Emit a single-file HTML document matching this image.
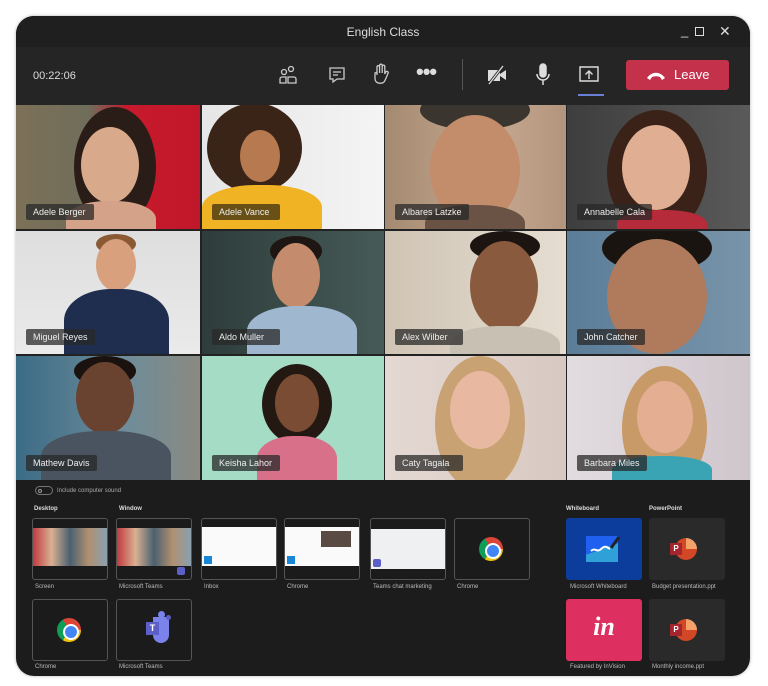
<!DOCTYPE html><html><head><style>
*{margin:0;padding:0;box-sizing:border-box}
body{width:768px;height:686px;background:#fff;font-family:"Liberation Sans",sans-serif;position:relative;overflow:hidden}
.win{position:absolute;left:16px;top:16px;width:734px;height:660px;border-radius:18px;background:#1c1c1c;overflow:hidden;box-shadow:0 0 3px rgba(0,0,0,.3)}
.title{position:absolute;left:0;top:0;width:734px;height:31px;background:#1f1f1f;color:#ddd;font-size:12px;text-align:center;line-height:32px}
.tb{position:absolute;left:0;top:31px;width:734px;height:58px;background:#252525}
.t{position:absolute;overflow:hidden}
.lbl{position:absolute;left:10px;bottom:9px;height:16px;padding:0 7px;background:rgba(40,40,40,.75);color:#eee;font-size:9px;line-height:16px;border-radius:2px;min-width:68px}
.hd{position:absolute;border-radius:50%}
.bd{position:absolute;border-radius:45% 45% 0 0}
.th{position:absolute;width:76px;height:62px;border:1.5px solid #555;border-radius:3px;background:#1b1b1b;overflow:hidden}
.cap{position:absolute;color:#bbb;font-size:6px}
.sec{position:absolute;color:#ddd;font-size:6px;font-weight:bold}
.chrome{position:absolute;width:24px;height:24px;border-radius:50%;background:conic-gradient(from -30deg,#db4437 0 120deg,#f4c20d 120deg 240deg,#0f9d58 240deg 360deg)}
.chrome:after{content:"";position:absolute;left:6px;top:6px;width:12px;height:12px;border-radius:50%;background:#4285f4;border:2px solid #fff}
.pp{position:absolute;left:26px;top:20px;width:22px;height:22px;border-radius:50%;background:conic-gradient(#f5a26a 0 90deg,#d24726 90deg 360deg)}
.pp:before{content:"P";position:absolute;left:-5px;top:5px;width:12px;height:12px;background:#a4262c;color:#fff;font-size:8px;font-weight:bold;text-align:center;line-height:12px}
</style></head><body>
<div class="win">
<div class="title">English Class</div>
<div style="position:absolute;left:665px;top:8px;color:#ddd;font-size:13px;line-height:14px">_</div>
<div style="position:absolute;left:679px;top:11px;width:9px;height:9px;border:1.3px solid #ddd"></div>
<div style="position:absolute;left:703px;top:7px;color:#ddd;font-size:14px">✕</div>
<div class="tb">
<div style="position:absolute;left:17px;top:23px;color:#ddd;font-size:11px">00:22:06</div>
<svg style="position:absolute;left:262px;top:18px" width="20" height="20" viewBox="0 0 20 20" fill="none" stroke="#ccc" stroke-width="1.3"><circle cx="13" cy="4" r="2.5"/><circle cx="6" cy="7" r="2.5"/><path d="M2 18v-4a2 2 0 012-2h4v6z"/><path d="M10 12h6a2 2 0 012 2v4h-8z"/></svg>
<svg style="position:absolute;left:311px;top:18px" width="20" height="20" viewBox="0 0 20 20" fill="none" stroke="#ccc" stroke-width="1.3"><path d="M3 3h14v11h-7l-4 3v-3H3z"/><path d="M6 7h8M6 10h5"/></svg>
<svg style="position:absolute;left:355px;top:16px" width="20" height="22" viewBox="0 0 20 22" fill="none" stroke="#ccc" stroke-width="1.3"><path d="M6 12V4a1.3 1.3 0 012.6 0v6V2.5a1.3 1.3 0 012.6 0V10V3.5a1.3 1.3 0 012.6 0V11l1-2a1.3 1.3 0 012.3 1.2l-3 7a5 5 0 01-4.6 3h-1A4.5 4.5 0 014 16v-6a1.2 1.2 0 012 0z"/></svg>
<div style="position:absolute;left:400px;top:12px;color:#ddd;font-size:22px;letter-spacing:-1px;font-weight:bold">•••</div>
<div style="position:absolute;left:446px;top:12px;width:1px;height:31px;background:#555"></div>
<svg style="position:absolute;left:470px;top:18px" width="22" height="20" viewBox="0 0 22 20"><path d="M2 5h12v11H2z" fill="#ddd"/><path d="M14 9l6-4v10l-6-4z" fill="#ddd"/><path d="M3 19L17 1" stroke="#252525" stroke-width="3"/><path d="M3 19L17 1" stroke="#ddd" stroke-width="1.3"/></svg>
<svg style="position:absolute;left:518px;top:16px" width="18" height="24" viewBox="0 0 18 24" fill="none" stroke="#ddd" stroke-width="1.5"><rect x="6" y="1" width="6" height="13" rx="3" fill="#ddd"/><path d="M3 11a6 6 0 0012 0M9 17v5"/></svg>
<svg style="position:absolute;left:562px;top:17px" width="22" height="22" viewBox="0 0 22 22" fill="none" stroke="#ddd" stroke-width="1.4"><path d="M2 3h18v14H2z"/><path d="M11 15V7M7.5 10.5L11 7l3.5 3.5"/></svg>
<div style="position:absolute;left:562px;top:47px;width:26px;height:2px;background:#6a7fd6"></div>
<div style="position:absolute;left:610px;top:13px;width:103px;height:30px;background:#c4314b;border-radius:3px;color:#fff;font-size:13px;line-height:30px;padding-left:48px">Leave</div>
<svg style="position:absolute;left:630px;top:24px" width="20" height="10" viewBox="0 0 20 10"><path d="M1 7c5-7 13-7 18 0l-3 2-2-3c-3-1-5-1-8 0l-2 3z" fill="#fff"/></svg>
</div>

<!-- grid -->
<div style="position:absolute;left:0;top:89px;width:734px;height:375px;background:#222"></div>
<div id="g"></div>
<!-- tiles -->
<div class="t" style="left:0;top:89px;width:184px;height:124px;background:linear-gradient(90deg,#7d7058 0,#6f6d5a 40%,#c81a2c 60%,#c0182a 100%)">
<div class="hd" style="left:58px;top:2px;width:82px;height:120px;background:#2a1d18"></div><div class="hd" style="left:65px;top:22px;width:58px;height:76px;background:#d9a98b"></div><div class="bd" style="left:50px;top:96px;width:90px;height:40px;background:#d3a289"></div>
<div class="lbl">Adele Berger</div></div>
<div class="t" style="left:186px;top:89px;width:182px;height:124px;background:linear-gradient(90deg,#e6e6e6,#f4f4f4)">
<div class="hd" style="left:5px;top:-2px;width:95px;height:90px;background:#3a2418"></div><div class="hd" style="left:38px;top:25px;width:40px;height:52px;background:#b7794f"></div><div class="bd" style="left:0;top:80px;width:120px;height:50px;background:#f0b323"></div>
<div class="lbl" style="background:rgba(70,55,20,.8)">Adele Vance</div></div>
<div class="t" style="left:369px;top:89px;width:181px;height:124px;background:linear-gradient(90deg,#a58a72,#c6a890 60%,#b2957c)">
<div class="hd" style="left:35px;top:-15px;width:110px;height:40px;background:#3b3530"></div><div class="hd" style="left:45px;top:10px;width:90px;height:110px;background:#c38c6a"></div><div class="bd" style="left:40px;top:100px;width:100px;height:40px;background:#6a5244"></div>
<div class="lbl">Albares Latzke</div></div>
<div class="t" style="left:551px;top:89px;width:183px;height:124px;background:linear-gradient(90deg,#3e3e3e,#5a5a5a)">
<div class="hd" style="left:40px;top:5px;width:100px;height:125px;background:#3a2218"></div><div class="hd" style="left:55px;top:20px;width:68px;height:85px;background:#e0ae92"></div><div class="bd" style="left:50px;top:105px;width:90px;height:30px;background:#b52b3a"></div>
<div class="lbl">Annabelle Cala</div></div>

<div class="t" style="left:0;top:215px;width:184px;height:123px;background:linear-gradient(180deg,#dedede,#eaeaea)">
<div class="hd" style="left:80px;top:3px;width:40px;height:20px;background:#8a5a34"></div><div class="hd" style="left:80px;top:8px;width:40px;height:52px;background:#d8a07c"></div><div class="bd" style="left:48px;top:58px;width:105px;height:70px;background:#1f2d4f"></div>
<div class="lbl">Miguel Reyes</div></div>
<div class="t" style="left:186px;top:215px;width:182px;height:123px;background:linear-gradient(90deg,#2e3d3b,#465a57)">
<div class="hd" style="left:68px;top:5px;width:52px;height:30px;background:#1e1612"></div><div class="hd" style="left:70px;top:12px;width:48px;height:65px;background:#c48c6c"></div><div class="bd" style="left:45px;top:75px;width:110px;height:55px;background:#9fb8cf"></div>
<div class="lbl">Aldo Muller</div></div>
<div class="t" style="left:369px;top:215px;width:181px;height:123px;background:linear-gradient(90deg,#cfc4b4,#e6ddd2)">
<div class="hd" style="left:85px;top:0;width:70px;height:30px;background:#1b1410"></div><div class="hd" style="left:85px;top:10px;width:68px;height:90px;background:#8a5a3e"></div><div class="bd" style="left:65px;top:95px;width:110px;height:40px;background:#c9c0b4"></div>
<div class="lbl">Alex Wilber</div></div>
<div class="t" style="left:551px;top:215px;width:183px;height:123px;background:linear-gradient(90deg,#5b7d98,#7894aa)">
<div class="hd" style="left:35px;top:-8px;width:110px;height:50px;background:#1a1410"></div><div class="hd" style="left:40px;top:8px;width:100px;height:115px;background:#b07a5c"></div>
<div class="lbl">John Catcher</div></div>

<div class="t" style="left:0;top:340px;width:184px;height:124px;background:linear-gradient(90deg,#3b6c86,#6f8c9a 60%,#8a8a80)">
<div class="hd" style="left:58px;top:0;width:62px;height:30px;background:#1a120e"></div><div class="hd" style="left:60px;top:6px;width:58px;height:72px;background:#6a4330"></div><div class="bd" style="left:25px;top:75px;width:130px;height:55px;background:#4a5460"></div>
<div class="lbl">Mathew Davis</div></div>
<div class="t" style="left:186px;top:340px;width:182px;height:124px;background:#a4dcc6">
<div class="hd" style="left:60px;top:8px;width:70px;height:80px;background:#241812"></div><div class="hd" style="left:73px;top:18px;width:44px;height:58px;background:#7a4c34"></div><div class="bd" style="left:55px;top:80px;width:80px;height:50px;background:#d8708a"></div>
<div class="lbl">Keisha Lahor</div></div>
<div class="t" style="left:369px;top:340px;width:181px;height:124px;background:linear-gradient(90deg,#e4d8d2,#d8c8c2)">
<div class="hd" style="left:50px;top:0;width:90px;height:135px;background:#c9a274"></div><div class="hd" style="left:65px;top:15px;width:60px;height:78px;background:#e8b9a0"></div>
<div class="lbl">Caty Tagala</div></div>
<div class="t" style="left:551px;top:340px;width:183px;height:124px;background:linear-gradient(90deg,#e2dce0,#cfc6cc)">
<div class="hd" style="left:55px;top:10px;width:85px;height:125px;background:#c89a68"></div><div class="hd" style="left:70px;top:25px;width:56px;height:72px;background:#e3ae92"></div><div class="bd" style="left:45px;top:100px;width:100px;height:30px;background:#3aa4b4"></div>
<div class="lbl">Barbara Miles</div></div>

<!-- bottom -->
<div style="position:absolute;left:19px;top:470px;width:18px;height:9px;border:1px solid #777;border-radius:5px"><div style="position:absolute;left:2px;top:1.5px;width:4px;height:4px;border-radius:50%;border:1px solid #999"></div></div>
<div class="cap" style="left:41px;top:472px;color:#aaa">Include computer sound</div>
<div class="sec" style="left:18px;top:490px">Desktop</div>
<div class="sec" style="left:103px;top:490px">Window</div>
<div class="sec" style="left:550px;top:490px">Whiteboard</div>
<div class="sec" style="left:633px;top:490px">PowerPoint</div>

<div class="th" style="left:16px;top:502px"><div style="position:absolute;left:0;top:9px;width:74px;height:38px;background:linear-gradient(90deg,#c13a40,#d9b090 25%,#4a6070 50%,#b09070 75%,#8aa0b0)"></div></div>
<div class="cap" style="left:19px;top:568px">Screen</div>
<div class="th" style="left:100px;top:502px"><div style="position:absolute;left:0;top:9px;width:74px;height:38px;background:linear-gradient(90deg,#c13a40,#d9b090 25%,#4a6070 50%,#b09070 75%,#8aa0b0)"></div><div style="position:absolute;left:60px;top:48px;width:8px;height:8px;border-radius:2px;background:#5b5fc7"></div></div>
<div class="cap" style="left:103px;top:568px">Microsoft Teams</div>
<div class="th" style="left:185px;top:502px"><div style="position:absolute;left:0;top:8px;width:74px;height:39px;background:#fafafa"></div><div style="position:absolute;left:2px;top:37px;width:8px;height:8px;background:#1a86d8"></div></div>
<div class="cap" style="left:188px;top:568px">Inbox</div>
<div class="th" style="left:268px;top:502px"><div style="position:absolute;left:0;top:8px;width:74px;height:39px;background:#fafafa"></div><div style="position:absolute;left:36px;top:12px;width:30px;height:16px;background:#5a4a44"></div><div style="position:absolute;left:2px;top:37px;width:8px;height:8px;background:#1a86d8"></div></div>
<div class="cap" style="left:271px;top:568px">Chrome</div>
<div class="th" style="left:354px;top:502px"><div style="position:absolute;left:0;top:10px;width:74px;height:40px;background:#eef0f2"></div><div style="position:absolute;left:2px;top:40px;width:8px;height:8px;background:#5b5fc7;border-radius:2px"></div></div>
<div class="cap" style="left:357px;top:568px">Teams chat marketing</div>
<div class="th" style="left:438px;top:502px"><div class="chrome" style="left:24px;top:18px"></div></div>
<div class="cap" style="left:441px;top:568px">Chrome</div>

<div class="th" style="left:16px;top:583px"><div class="chrome" style="left:24px;top:18px"></div></div>
<div class="cap" style="left:19px;top:648px">Chrome</div>
<div class="th" style="left:100px;top:583px"><div style="position:absolute;left:29px;top:22px;width:13px;height:13px;background:#5b5fc7;color:#fff;font-size:9px;font-weight:bold;text-align:center;line-height:13px;z-index:2">T</div><div style="position:absolute;left:36px;top:17px;width:16px;height:26px;border-radius:0 0 8px 8px;background:#7b83eb"></div><div style="position:absolute;left:41px;top:11px;width:7px;height:7px;border-radius:50%;background:#7b83eb"></div><div style="position:absolute;left:49px;top:15px;width:5px;height:5px;border-radius:50%;background:#5b5fc7"></div></div>
<div class="cap" style="left:103px;top:648px">Microsoft Teams</div>

<div class="th" style="left:550px;top:502px;border:none;background:#0c3c9c"><div style="position:absolute;left:20px;top:18px;width:32px;height:26px;background:linear-gradient(160deg,#2060f0 50%,#30a0d8 50%)"></div><svg style="position:absolute;left:22px;top:16px" width="34" height="24"><path d="M3 17c4-4 6 2 10-2s6-2 9 0" stroke="#fff" stroke-width="2" fill="none"/><path d="M23 14L31 3" stroke="#222" stroke-width="3"/></svg></div>
<div class="cap" style="left:554px;top:568px">Microsoft Whiteboard</div>
<div class="th" style="left:633px;top:502px;border:none;background:#2a2a2a"><div class="pp"></div></div>
<div class="cap" style="left:636px;top:568px">Budget presentation.ppt</div>
<div class="th" style="left:550px;top:583px;border:none;background:#dd3060"><div style="position:absolute;left:0;width:76px;top:13px;text-align:center;color:#fff;font-family:'Liberation Serif',serif;font-style:italic;font-weight:bold;font-size:26px">in</div></div>
<div class="cap" style="left:554px;top:648px">Featured by InVision</div>
<div class="th" style="left:633px;top:583px;border:none;background:#2a2a2a"><div class="pp"></div></div>
<div class="cap" style="left:636px;top:648px">Monthly income.ppt</div>
</div>
</body></html>
